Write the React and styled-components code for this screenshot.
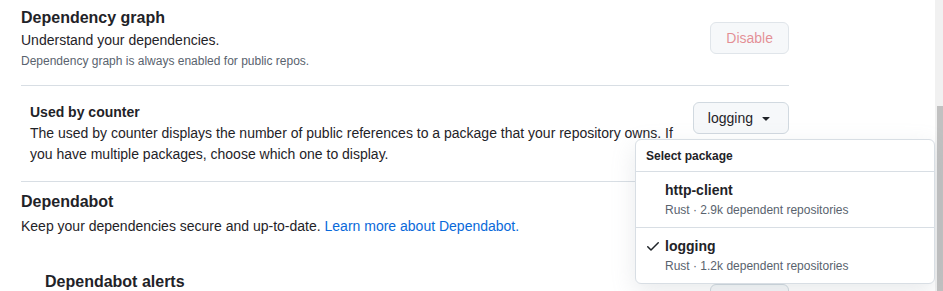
import React from 'react';
import styled, {createGlobalStyle} from 'styled-components';

const Color = {
    FG: '#1f2328',
    MUTED: '#59636e',
    BORDER: '#d8dee4',
    LINK: '#0969da',
    BTN: '#f6f8fa',
    BTN_BORDER: '#d1d9e0',
};

const packages = [
    {name: 'http-client', lang: 'Rust', count: '2.9k'},
    {name: 'logging', lang: 'Rust', count: '1.2k', selected: true},
];

function App () {
    return (
        <>
            <GlobalStyle/>
            <Page>
                <Main>
                    <Section $bottom={15}>
                        <Row $align={"center"}>
                            <Text>
                                <Title>Dependency graph</Title>
                                <Body>Understand your dependencies.</Body>
                                <Note>Dependency graph is always enabled for public repos.</Note>
                            </Text>
                            <Button $danger $pad={15} disabled>Disable</Button>
                        </Row>
                    </Section>

                    <Section $indent={9} $top={16} $bottom={16}>
                        <Row>
                            <Text $width={648}>
                                <SubTitle>Used by counter</SubTitle>
                                <Body>
                                    The used by counter displays the number of public references to a package that your repository owns. If you have multiple packages, choose which one to display.
                                </Body>
                            </Text>
                            <MenuAnchor>
                                <Button $pad={14}>
                                    logging
                                    <Caret viewBox="0 0 16 16" width="16" height="16">
                                        <path d="m4.427 7.427 3.396 3.396a.25.25 0 0 0 .354 0l3.396-3.396A.25.25 0 0 0 11.396 7H4.604a.25.25 0 0 0-.177.427Z"/>
                                    </Caret>
                                </Button>
                                <Menu>
                                    <MenuHeader>Select package</MenuHeader>
                                    {packages.map(p => (
                                        <MenuItem key={p.name}>
                                            <Check>
                                                {p.selected && (
                                                    <svg viewBox="0 0 16 16" width="16" height="16">
                                                        <path d="M13.78 4.22a.75.75 0 0 1 0 1.06l-7.25 7.25a.75.75 0 0 1-1.06 0L2.22 9.28a.75.75 0 0 1 1.06-1.06L6 10.94l6.72-6.72a.75.75 0 0 1 1.06 0Z"/>
                                                    </svg>
                                                )}
                                            </Check>
                                            <div>
                                                <ItemName>{p.name}</ItemName>
                                                <ItemMeta>{p.lang} · {p.count} dependent repositories</ItemMeta>
                                            </div>
                                        </MenuItem>
                                    ))}
                                </Menu>
                            </MenuAnchor>
                        </Row>
                    </Section>

                    <Section $top={8} $last>
                        <Title>Dependabot</Title>
                        <Body $top={2}>
                            Keep your dependencies secure and up-to-date. <Link href="#">Learn more about Dependabot.</Link>
                        </Body>
                        <Row $indent={24} $top={33}>
                            <Title>Dependabot alerts</Title>
                            <Button $pad={15} $offset={14}>Disable</Button>
                        </Row>
                    </Section>
                </Main>
                <Scrollbar>
                    <Thumb/>
                </Scrollbar>
            </Page>
        </>
    )
}

const GlobalStyle = createGlobalStyle`
    html, body {
        margin: 0;
        padding: 0;
        background: #ffffff;
        overflow: hidden;
    }
    body {
        font-family: "Liberation Sans", Arial, sans-serif;
        color: ${Color.FG};
    }
`;
const Page = styled.div`
    display: flex;
    width: 943px;
    height: 291px;
    overflow: hidden;
`;
const Main = styled.div`
    flex: 1;
    padding: 6px 0 0 21px;
`;
const Section = styled.section`
    width: 768px;
    box-sizing: border-box;
    padding: ${p => p.$top || 0}px 0 ${p => p.$bottom ?? 17}px ${p => p.$indent || 0}px;
    border-bottom: ${p => p.$last ? 'none' : `1px solid ${Color.BORDER}`};
`;
const Row = styled.div`
    display: flex;
    justify-content: space-between;
    align-items: ${p => p.$align || 'flex-start'};
    margin-top: ${p => p.$top || 0}px;
    padding-left: ${p => p.$indent || 0}px;
`;
const Text = styled.div`
    max-width: ${p => p.$width ? `${p.$width}px` : 'none'};
`;
const Title = styled.h2`
    margin: 0;
    font-size: 16px;
    line-height: 24px;
    font-weight: 600;
`;
const SubTitle = styled.h3`
    margin: 0;
    font-size: 14px;
    line-height: 21px;
    font-weight: 600;
`;
const Body = styled.p`
    margin: ${p => p.$top || 0}px 0 0;
    font-size: 14px;
    line-height: 21px;
`;
const Note = styled.p`
    margin: 1px 0 0;
    font-size: 12px;
    line-height: 18px;
    color: ${Color.MUTED};
`;
const Link = styled.a`
    color: ${Color.LINK};
    text-decoration: none;
`;
const Button = styled.button`
    display: inline-flex;
    align-items: center;
    gap: 5px;
    flex-shrink: 0;
    height: 32px;
    margin-top: ${p => p.$offset || 0}px;
    padding: 0 ${p => p.$pad ?? 16}px;
    border: 1px solid ${Color.BTN_BORDER};
    border-radius: 6px;
    background: ${Color.BTN};
    font-family: inherit;
    font-size: 14px;
    font-weight: 500;
    color: ${p => p.$danger ? 'rgba(209, 36, 47, 0.5)' : Color.FG};
    cursor: pointer;
    &:disabled {
        border-color: #e0e5ea;
        cursor: default;
    }
`;
const Caret = styled.svg`
    fill: ${Color.FG};
`;
const MenuAnchor = styled.div`
    position: relative;
`;
const Menu = styled.div`
    position: absolute;
    top: 37px;
    right: -146px;
    width: 298px;
    z-index: 10;
    background: #ffffff;
    border: 1px solid ${Color.BORDER};
    border-radius: 6px;
    box-shadow: 0 8px 24px rgba(140, 149, 159, 0.2);
    overflow: hidden;
`;
const MenuHeader = styled.div`
    padding: 7px 10px 6px;
    font-size: 12px;
    line-height: 18px;
    font-weight: 600;
    border-bottom: 1px solid ${Color.BORDER};
`;
const MenuItem = styled.div`
    display: flex;
    padding: 8px 16px 8px 9px;
    & + & {
        border-top: 1px solid ${Color.BORDER};
    }
`;
const Check = styled.span`
    width: 16px;
    margin-right: 4px;
    padding-top: 2px;
    svg {
        fill: ${Color.FG};
        display: block;
    }
`;
const ItemName = styled.div`
    font-size: 14px;
    line-height: 21px;
    font-weight: 600;
`;
const ItemMeta = styled.div`
    font-size: 12px;
    line-height: 18px;
    color: ${Color.MUTED};
`;
const Scrollbar = styled.div`
    width: 8px;
    background: #f1f1f1;
    padding-top: 106px;
    display: flex;
    justify-content: flex-end;
`;
const Thumb = styled.div`
    width: 6px;
    height: 100%;
    background: #c1c1c1;
`;

export default App;
